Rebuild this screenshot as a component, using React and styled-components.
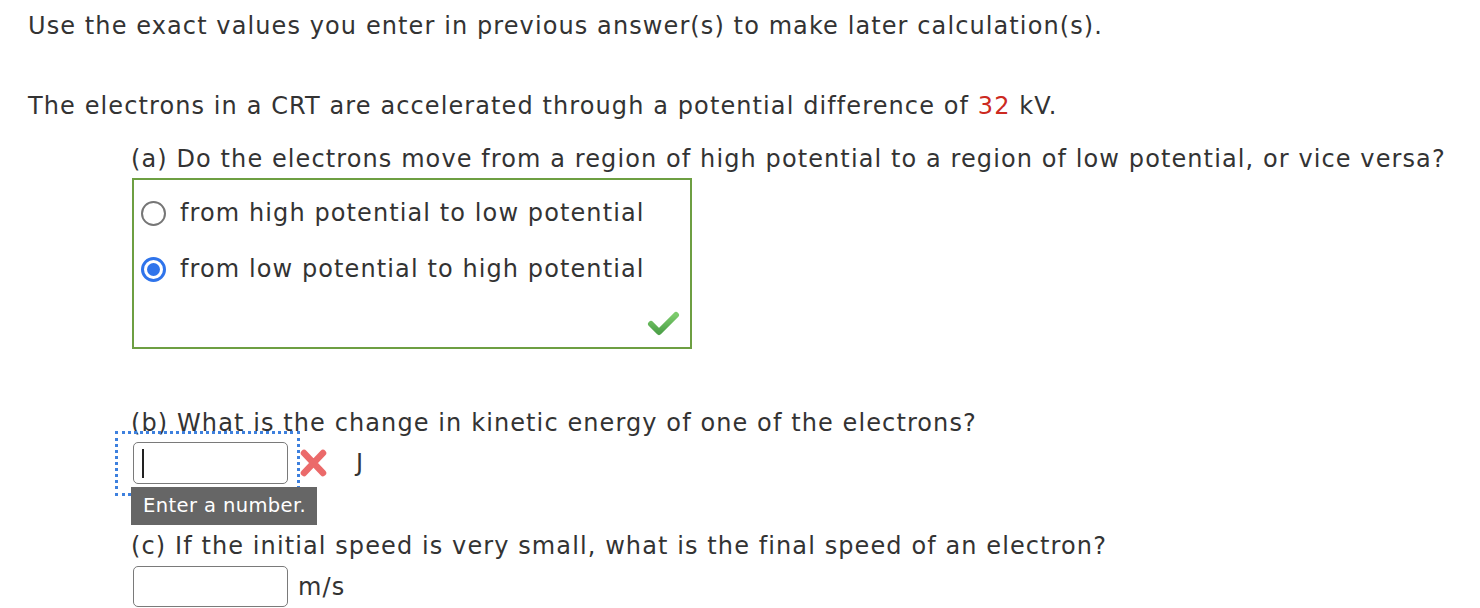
import styled, { createGlobalStyle } from "styled-components";

const GlobalStyle = createGlobalStyle`
  html, body {
    margin: 0;
    padding: 0;
    background: #ffffff;
  }
  body {
    font-family: Verdana, "DejaVu Sans", sans-serif;
    color: #333333;
  }
`;

const Page = styled.div`
  width: 1480px;
  height: 608px;
  overflow: hidden;
  padding: 11px 28px 0;
  box-sizing: border-box;
  font-size: 24px;
  line-height: 30px;
  letter-spacing: 1.1px;
`;

const Paragraph = styled.p`
  margin: ${(p) => p.$top || 0}px 0 0;
  white-space: nowrap;
`;

const Value = styled.span`
  color: #cc2a1f;
`;

const Part = styled.div`
  margin-left: 103px;
`;

const PartLabel = styled.div`
  margin-top: ${(p) => p.$top || 0}px;
  white-space: nowrap;
`;

const ChoiceBox = styled.div`
  margin: 4px 0 0 1px;
  width: 560px;
  box-sizing: border-box;
  border: 2px solid #6d9f42;
  padding: 18px 9px 13px 7px;
  display: flex;
  flex-direction: column;
  gap: 26px;
`;

const Option = styled.label`
  display: flex;
  align-items: center;
  gap: 14px;
  white-space: nowrap;
`;

const Radio = styled.span`
  width: 25px;
  height: 25px;
  box-sizing: border-box;
  border-radius: 50%;
  flex-shrink: 0;
  border: ${(p) => (p.$checked ? "3px solid #2f74eb" : "2px solid #767676")};
  display: flex;
  align-items: center;
  justify-content: center;
  &::after {
    content: "";
    display: ${(p) => (p.$checked ? "block" : "none")};
    width: 13px;
    height: 13px;
    border-radius: 50%;
    background: #2f74eb;
  }
`;

const CheckRow = styled.div`
  display: flex;
  justify-content: flex-end;
  height: 24px;
`;

const AnswerRow = styled.div`
  margin-top: ${(p) => p.$top || 0}px;
  display: flex;
  align-items: center;
  position: relative;
`;

const Focus = styled.span`
  position: relative;
  display: inline-flex;
  &::before {
    content: "";
    position: absolute;
    top: -11px;
    left: -16px;
    right: -12px;
    bottom: -12px;
    border: 3px dotted #3d80de;
    pointer-events: none;
  }
`;

const TextBox = styled.div`
  width: 155px;
  height: ${(p) => p.$h || 42}px;
  margin-left: 2px;
  box-sizing: border-box;
  border: 1.5px solid #7a7a7a;
  border-radius: 5px;
  background: #fff;
  display: flex;
  align-items: center;
  padding-left: 8px;
`;

const Caret = styled.span`
  width: 2px;
  height: 29px;
  background: #222;
`;

const Unit = styled.span`
  margin-left: ${(p) => p.$gap}px;
`;

const Tooltip = styled.div`
  position: absolute;
  top: 45px;
  left: 0;
  width: 186px;
  height: 38px;
  box-sizing: border-box;
  background: #666666;
  color: #ffffff;
  font-size: 19.5px;
  letter-spacing: 0.4px;
  line-height: 38px;
  padding-left: 12px;
  white-space: nowrap;
`;

const CrossIcon = styled.svg`
  margin-left: 11px;
  flex-shrink: 0;
`;

const CheckMark = () => (
  <svg width="34" height="26" viewBox="0 0 34 26">
    <defs>
      <linearGradient id="chk" x1="0" y1="0" x2="0" y2="1">
        <stop offset="0" stopColor="#7ccb6c" />
        <stop offset="1" stopColor="#4fa24a" />
      </linearGradient>
    </defs>
    <path
      d="M4 14 L12 22 L29 5"
      fill="none"
      stroke="url(#chk)"
      strokeWidth="6"
      strokeLinecap="round"
      strokeLinejoin="round"
    />
  </svg>
);

const Cross = () => (
  <CrossIcon width="29" height="30" viewBox="0 0 29 30">
    <path
      d="M5 5 L24 25 M24 5 L5 25"
      fill="none"
      stroke="#e95d5d"
      strokeWidth="6.5"
      strokeLinecap="round"
      opacity="0.92"
    />
  </CrossIcon>
);

export default function App() {
  return (
    <>
      <GlobalStyle />
      <Page>
        <Paragraph>
          Use the exact values you enter in previous answer(s) to make later calculation(s).
        </Paragraph>
        <Paragraph $top={50}>
          The electrons in a CRT are accelerated through a potential difference of <Value>32</Value> kV.
        </Paragraph>
        <Part>
          <PartLabel $top={23}>
            (a) Do the electrons move from a region of high potential to a region of low potential, or vice versa?
          </PartLabel>
          <ChoiceBox>
            <Option>
              <Radio />
              from high potential to low potential
            </Option>
            <Option>
              <Radio $checked />
              from low potential to high potential
            </Option>
            <CheckRow>
              <CheckMark />
            </CheckRow>
          </ChoiceBox>

          <PartLabel $top={59}>(b) What is the change in kinetic energy of one of the electrons?</PartLabel>
          <AnswerRow $top={4}>
            <Focus>
              <TextBox>
                <Caret />
              </TextBox>
            </Focus>
            <Cross />
            <Unit $gap={28}>J</Unit>
            <Tooltip>Enter a number.</Tooltip>
          </AnswerRow>

          <PartLabel $top={47}>(c) If the initial speed is very small, what is the final speed of an electron?</PartLabel>
          <AnswerRow $top={5}>
            <TextBox $h={41} />
            <Unit $gap={10}>m/s</Unit>
          </AnswerRow>
        </Part>
      </Page>
    </>
  );
}
